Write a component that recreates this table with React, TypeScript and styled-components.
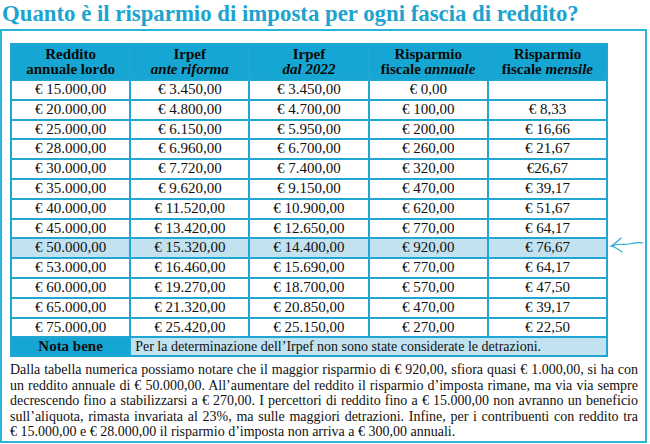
import React from "react";
import styled, { createGlobalStyle } from "styled-components";

const Global = createGlobalStyle`
  html, body { margin: 0; padding: 0; background: #ffffff; }
  body { font-family: "Liberation Serif", "DejaVu Serif", serif; color: #111; }
`;

const BLUE = "#15a6d3";
const LINE = "#1fa6d3";
const LIGHT = "#c3e2ef";

const Page = styled.div`
  width: 650px;
  height: 444px;
  overflow: hidden;
`;

const Title = styled.h1`
  margin: 0;
  padding: 1px 0 0 2px;
  height: 28px;
  font-family: "Liberation Serif", serif;
  font-weight: 700;
  font-size: 22.8px;
  line-height: 26px;
  color: #1ca3cf;
  white-space: nowrap;
`;

const Frame = styled.div`
  position: relative;
  box-sizing: border-box;
  width: 647px;
  height: 414px;
  border: 2px solid #2ab4da;
  padding: 12px 0 0 8px;
`;

const Table = styled.table`
  border-collapse: collapse;
  width: 598px;
  table-layout: fixed;
  font-size: 15px;
`;

const HeadCell = styled.th`
  background: ${BLUE};
  color: #0a0a0a;
  font-weight: 700;
  font-size: 15px;
  line-height: 15px;
  height: 34px;
  padding: 0;
  text-align: center;
  vertical-align: middle;
  border: 2px solid ${LINE};
  border-left: 2px solid #a9dcee;
  &:first-child { border-left: 2px solid ${LINE}; }
`;

const Row = styled.tr<{ $hl?: boolean }>`
  background: ${(p) => (p.$hl ? LIGHT : "#ffffff")};
`;

const Cell = styled.td`
  height: 17.8px;
  padding: 0;
  line-height: 17.8px;
  text-align: center;
  border: 2px solid ${LINE};
  white-space: nowrap;
`;

const NoteLabel = styled.td`
  background: ${BLUE};
  font-weight: 700;
  text-align: center;
  height: 17px;
  line-height: 17px;
  padding: 0;
  border: 2px solid ${LINE};
`;

const NoteText = styled.td`
  background: ${LIGHT};
  text-align: left;
  padding: 0 0 0 4px;
  height: 17px;
  line-height: 17px;
  font-size: 14px;
  border: 2px solid ${LINE};
  white-space: nowrap;
`;

const Para = styled.div`
  margin-top: 5px;
  width: 628px;
  font-size: 14px;
  line-height: 15.5px;
  color: #111;
`;

const Line = styled.div<{ $last?: boolean }>`
  text-align: justify;
  text-align-last: ${(p) => (p.$last ? "left" : "justify")};
  white-space: nowrap;
`;

const ArrowWrap = styled.div`
  position: absolute;
  left: 607px;
  top: 205px;
  width: 36px;
  height: 18px;
`;

const rows: [string, string, string, string, string][] = [
  ["€ 15.000,00", "€ 3.450,00", "€ 3.450,00", "€ 0,00", ""],
  ["€ 20.000,00", "€ 4.800,00", "€ 4.700,00", "€ 100,00", "€ 8,33"],
  ["€ 25.000,00", "€ 6.150,00", "€ 5.950,00", "€ 200,00", "€ 16,66"],
  ["€ 28.000,00", "€ 6.960,00", "€ 6.700,00", "€ 260,00", "€ 21,67"],
  ["€ 30.000,00", "€ 7.720,00", "€ 7.400,00", "€ 320,00", "€26,67"],
  ["€ 35.000,00", "€ 9.620,00", "€ 9.150,00", "€ 470,00", "€ 39,17"],
  ["€ 40.000,00", "€ 11.520,00", "€ 10.900,00", "€ 620,00", "€ 51,67"],
  ["€ 45.000,00", "€ 13.420,00", "€ 12.650,00", "€ 770,00", "€ 64,17"],
  ["€ 50.000,00", "€ 15.320,00", "€ 14.400,00", "€ 920,00", "€ 76,67"],
  ["€ 53.000,00", "€ 16.460,00", "€ 15.690,00", "€ 770,00", "€ 64,17"],
  ["€ 60.000,00", "€ 19.270,00", "€ 18.700,00", "€ 570,00", "€ 47,50"],
  ["€ 65.000,00", "€ 21.320,00", "€ 20.850,00", "€ 470,00", "€ 39,17"],
  ["€ 75.000,00", "€ 25.420,00", "€ 25.150,00", "€ 270,00", "€ 22,50"],
];

const lines = [
  "Dalla tabella numerica possiamo notare che il maggior risparmio di € 920,00, sfiora quasi € 1.000,00, si ha con",
  "un reddito annuale di € 50.000,00. All’aumentare del reddito il risparmio d’imposta rimane, ma via via sempre",
  "decrescendo fino a stabilizzarsi a € 270,00. I percettori di reddito fino a € 15.000,00 non avranno un beneficio",
  "sull’aliquota, rimasta invariata al 23%, ma sulle maggiori detrazioni. Infine, per i contribuenti con reddito tra",
  "€ 15.000,00 e € 28.000,00 il risparmio d’imposta non arriva a € 300,00 annuali.",
];

export default function App() {
  return (
    <Page>
      <Global />
      <Title>Quanto è il risparmio di imposta per ogni fascia di reddito?</Title>
      <Frame>
        <Table>
          <thead>
            <tr>
              <HeadCell>Reddito<br />annuale lordo</HeadCell>
              <HeadCell>Irpef<br /><i>ante riforma</i></HeadCell>
              <HeadCell>Irpef<br /><i>dal 2022</i></HeadCell>
              <HeadCell>Risparmio<br />fiscale <i>annuale</i></HeadCell>
              <HeadCell>Risparmio<br />fiscale <i>mensile</i></HeadCell>
            </tr>
          </thead>
          <tbody>
            {rows.map((r, i) => (
              <Row key={i} $hl={r[0] === "€ 50.000,00"}>
                {r.map((c, j) => (
                  <Cell key={j}>{c}</Cell>
                ))}
              </Row>
            ))}
            <tr>
              <NoteLabel>Nota bene</NoteLabel>
              <NoteText colSpan={4}>
                Per la determinazione dell’Irpef non sono state considerate le detrazioni.
              </NoteText>
            </tr>
          </tbody>
        </Table>
        <ArrowWrap>
          <svg width="36" height="18" viewBox="0 0 36 18" fill="none">
            <path d="M12 2 C9 5 6 8 2 10 C6 11 9 13 13 16" stroke="#2aaad6" strokeWidth="1.2" strokeLinecap="round" />
            <path d="M3 10 C9 7 14 9 20 8 C25 7 29 6 34 7" stroke="#2aaad6" strokeWidth="1.2" strokeLinecap="round" />
          </svg>
        </ArrowWrap>
        <Para>
          {lines.map((l, i) => (
            <Line key={i} $last={i === lines.length - 1}>{l}</Line>
          ))}
        </Para>
      </Frame>
    </Page>
  );
}
